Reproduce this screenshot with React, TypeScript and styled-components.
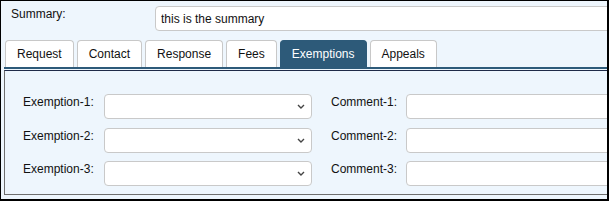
import React from "react";
import styled, { createGlobalStyle } from "styled-components";

const GlobalStyle = createGlobalStyle`
  body {
    margin: 0;
    font-family: "Liberation Sans", Arial, sans-serif;
  }
  * {
    box-sizing: border-box;
  }
`;

const tabs = ["Request", "Contact", "Response", "Fees", "Exemptions", "Appeals"];
const activeTab = "Exemptions";
const rows = [1, 2, 3];

export default function App() {
  return (
    <>
      <GlobalStyle />
      <Frame>
        <SummaryRow>
          <SummaryLabel>Summary:</SummaryLabel>
          <TextInput $width={460} defaultValue="this is the summary" />
        </SummaryRow>

        <TabBar>
          {tabs.map((t) => (
            <Tab key={t} $active={t === activeTab}>
              {t}
            </Tab>
          ))}
        </TabBar>

        <Panel>
          {rows.map((n) => (
            <FieldRow key={n}>
              <FieldLabel $width={81}>Exemption-{n}:</FieldLabel>
              <SelectWrap>
                <Select defaultValue="">
                  <option value=""></option>
                </Select>
                <Chevron width="8" height="5" viewBox="0 0 8 5">
                  <path d="M1 1 L4 4 L7 1" fill="none" stroke="#444" strokeWidth="1.4" />
                </Chevron>
              </SelectWrap>
              <FieldLabel $width={75} $indent={19}>
                Comment-{n}:
              </FieldLabel>
              <TextInput $width={208} />
            </FieldRow>
          ))}
        </Panel>
      </Frame>
    </>
  );
}

const Frame = styled.div`
  width: 609px;
  height: 201px;
  border: 1px solid #000;
  border-right-width: 2px;
  border-bottom-width: 2px;
  background: #eef6fd;
  overflow: hidden;
  color: #111;
  font-size: 12px;
`;

const SummaryRow = styled.div`
  display: flex;
  align-items: flex-start;
  padding: 5px 0 0 10px;
  white-space: nowrap;
`;

const SummaryLabel = styled.label`
  width: 144px;
  flex: none;
  line-height: 14px;
  padding-top: 1px;
`;

const TextInput = styled.input<{ $width: number }>`
  flex: none;
  width: ${(p) => p.$width}px;
  height: 25px;
  border: 1px solid #c9c9c9;
  border-radius: 4px;
  background: #fff;
  padding: 0 5px;
  font: inherit;
  font-size: 12px;
  color: #111;
  outline: none;
`;

const TabBar = styled.div`
  display: flex;
  gap: 3px;
  margin: 9px 0 0 3px;
  padding-left: 1px;
  border-bottom: 2px solid #2d5a79;
`;

const Tab = styled.div<{ $active?: boolean }>`
  height: 27px;
  padding: 0 11px;
  display: flex;
  align-items: center;
  white-space: nowrap;
  border: 1px solid ${(p) => (p.$active ? "#2d5a79" : "#c8c8c8")};
  border-bottom: none;
  border-radius: 4px 4px 0 0;
  background: ${(p) => (p.$active ? "#2d5a79" : "#fff")};
  color: ${(p) => (p.$active ? "#fff" : "#111")};
`;

const Panel = styled.div`
  margin: 1px 0 0 3px;
  width: 640px;
  border: 1px solid #6e6e6e;
  border-top-color: #1f2a48;
  padding: 23px 0 8px 18px;
  display: flex;
  flex-direction: column;
  gap: 8.5px;
`;

const FieldRow = styled.div`
  display: flex;
  align-items: flex-start;
  height: 25px;
  white-space: nowrap;
`;

const FieldLabel = styled.label<{ $width: number; $indent?: number }>`
  flex: none;
  box-sizing: content-box;
  width: ${(p) => p.$width}px;
  padding-left: ${(p) => p.$indent ?? 0}px;
  line-height: 14px;
  padding-top: 1px;
`;

const SelectWrap = styled.div`
  position: relative;
  flex: none;
  width: 208px;
  height: 25px;
`;

const Select = styled.select`
  appearance: none;
  width: 100%;
  height: 100%;
  border: 1px solid #c9c9c9;
  border-radius: 4px;
  background: #fff;
  font: inherit;
  font-size: 12px;
  outline: none;
`;

const Chevron = styled.svg`
  position: absolute;
  right: 7px;
  top: 10px;
  pointer-events: none;
`;
